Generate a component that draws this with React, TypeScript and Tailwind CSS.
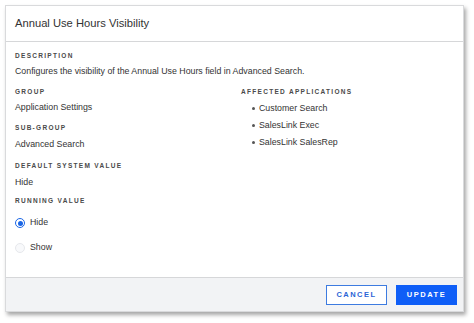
import React from 'react';

const Label: React.FC<{ children: React.ReactNode; className?: string }> = ({ children, className = '' }) => (
  <div className={`h-[10px] leading-[10px] text-[6.5px] font-bold tracking-[0.2em] text-[#4a4a4a] ${className}`}>{children}</div>
);

const Value: React.FC<{ children: React.ReactNode; className?: string }> = ({ children, className = '' }) => (
  <p className={`h-[12px] leading-[12px] text-[8.8px] text-[#333] ${className}`}>{children}</p>
);

const Radio: React.FC<{ checked?: boolean; label: string }> = ({ checked, label }) => (
  <div className="flex items-center gap-[5px] h-[14px]">
    {checked ? (
      <span className="w-[10px] h-[10px] rounded-full border-[1.5px] border-[#1a66e6] flex items-center justify-center">
        <span className="w-[5px] h-[5px] rounded-full bg-[#1a66e6]" />
      </span>
    ) : (
      <span className="w-[10px] h-[10px] rounded-full border border-[#e6e8ec] bg-[#f8f9fb]" />
    )}
    <span className="text-[8.8px] text-[#333]">{label}</span>
  </div>
);

export default function App() {
  return (
    <div className="w-[474px] h-[323px] bg-white pt-[5px] pl-[5px]" style={{ fontFamily: '"Liberation Sans", Arial, sans-serif' }}>
      <div className="w-[459px] h-[307px] bg-white border border-[#d9dadc] shadow-[2px_3px_4px_rgba(0,0,0,0.35)] flex flex-col">
        <div className="h-[36px] border-b border-[#d6d7d9] flex items-center px-[9px]">
          <h1 className="text-[11.2px] text-[#333]">Annual Use Hours Visibility</h1>
        </div>
        <div className="flex-1 px-[9px] pt-[9px]">
          <Label>DESCRIPTION</Label>
          <Value className="mt-[4px]">Configures the visibility of the Annual Use Hours field in Advanced Search.</Value>
          <div className="flex mt-[10px]">
            <div className="w-[226px]">
              <Label>GROUP</Label>
              <Value className="mt-[4px]">Application Settings</Value>
              <Label className="mt-[10px]">SUB-GROUP</Label>
              <Value className="mt-[5px]">Advanced Search</Value>
              <Label className="mt-[11px]">DEFAULT SYSTEM VALUE</Label>
              <Value className="mt-[5px]">Hide</Value>
              <Label className="mt-[8px]">RUNNING VALUE</Label>
              <div className="mt-[10px] flex flex-col gap-[11px]">
                <Radio checked label="Hide" />
                <Radio label="Show" />
              </div>
            </div>
            <div>
              <Label>AFFECTED APPLICATIONS</Label>
              <ul className="mt-[5px] ml-[11px] flex flex-col gap-[4px]">
                {['Customer Search', 'SalesLink Exec', 'SalesLink SalesRep'].map((t) => (
                  <li key={t} className="flex items-center gap-[4px] text-[8.8px] text-[#333] h-[13px]">
                    <span className="w-[3px] h-[3px] rounded-full bg-[#555]" />
                    {t}
                  </li>
                ))}
              </ul>
            </div>
          </div>
        </div>
        <div className="h-[34px] bg-[#f2f3f5] border-t border-[#d6d7d9] flex items-center justify-end gap-[9px] pr-[6px]">
          <button className="w-[61px] h-[20px] border border-[#3d7be0] bg-white text-[#2a64d6] text-[7.5px] font-bold tracking-[0.2em]">CANCEL</button>
          <button className="w-[61px] h-[20px] bg-[#0f5ef7] text-white text-[7.5px] font-bold tracking-[0.2em]">UPDATE</button>
        </div>
      </div>
    </div>
  );
}
